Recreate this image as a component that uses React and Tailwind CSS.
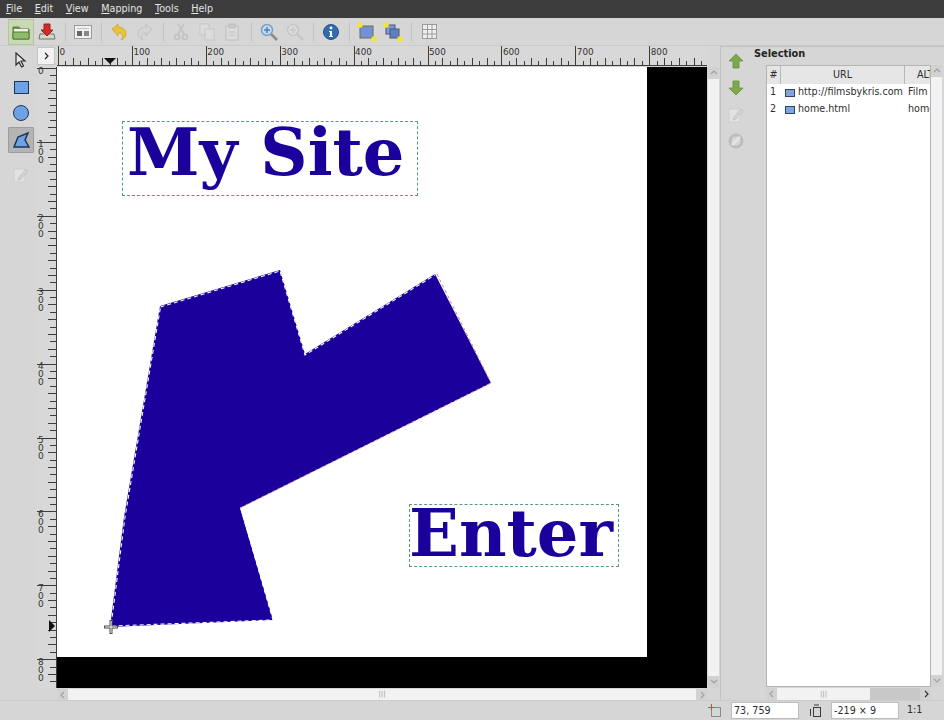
import React from "react";

const PX_PER_100 = 73.9;

const Sep = () => <div className="w-px h-[20px] bg-[#c4c4c4] ml-[5px] mr-[4px]" />;

const ToolBtn = ({ children, active }) => (
  <div
    className={`w-[26px] h-[26px] flex items-center justify-center ${
      active ? "bg-[#c9d9b4] border border-[#b3c49e]" : ""
    }`}
  >
    {children}
  </div>
);

const Mnemonic = ({ first, rest }) => (
  <span className="text-[9.6px] text-[#e4e4e4]">
    <span className="underline">{first}</span>
    {rest}
  </span>
);

const OpenIcon = () => (
  <svg width="18" height="16" viewBox="0 0 18 16">
    <path d="M1 3h6l1 2h9v10H1z" fill="#6e9a4e" stroke="#55793a" />
    <rect x="2" y="5" width="14" height="3" fill="#f0f0e8" />
    <path d="M1 8h16v7H1z" fill="#8fbb6c" stroke="#55793a" />
  </svg>
);

const SaveIcon = () => (
  <svg width="18" height="18" viewBox="0 0 18 18">
    <path d="M2 11h14l1 5H1z" fill="#d8d4ce" stroke="#77736c" />
    <path d="M6 1h6v6h3l-6 6-6-6h3z" fill="#cc2e2a" stroke="#9c1f1c" />
  </svg>
);

const ImageIcon = () => (
  <svg width="18" height="14" viewBox="0 0 18 14">
    <rect x="0.500" y="0.500" width="17" height="13" fill="#f0f0f0" stroke="#9c9c9c" />
    <rect x="3" y="6" width="5" height="5" fill="#666" />
    <rect x="10" y="6" width="5" height="5" fill="#888" />
    <rect x="3" y="3" width="12" height="1" fill="#c4c4c4" />
  </svg>
);

const UndoIcon = ({ flip, color = "#e9c23a", line = "#c9a436" }) => (
  <svg width="16" height="18" viewBox="0 0 16 18" className={flip ? "-scale-x-100" : ""}>
    <path
      d="M1 6l6-5v3c5 0 8 3 8 7 0 3-2 5-5 6 2-2 2-6-1-7-1 0-1.500 0-2 0v3z"
      fill={color}
      stroke={line}
      strokeWidth="0.800"
    />
  </svg>
);

const CutIcon = () => (
  <svg width="16" height="18" viewBox="0 0 16 18" fill="none" stroke="#c2c2c2" strokeWidth="1.600">
    <circle cx="4" cy="14" r="2.500" />
    <circle cx="12" cy="14" r="2.500" />
    <path d="M5 11L11 1M11 11L5 1" />
  </svg>
);

const CopyIcon = () => (
  <svg width="16" height="18" viewBox="0 0 16 18" fill="#dcdcdc" stroke="#c6c6c6">
    <rect x="1" y="1" width="9" height="11" />
    <rect x="6" y="6" width="9" height="11" />
  </svg>
);

const PasteIcon = () => (
  <svg width="16" height="18" viewBox="0 0 16 18" fill="#dcdcdc" stroke="#bebebe">
    <rect x="1" y="3" width="12" height="14" />
    <rect x="4" y="1" width="6" height="4" fill="#c8c8c8" />
    <path d="M4 9h6M4 12h6" />
  </svg>
);

const ZoomIcon = ({ on }) => (
  <svg width="18" height="18" viewBox="0 0 18 18">
    <path d="M11 11l6 6" stroke={on ? "#8a8a8a" : "#c6c6c6"} strokeWidth="2.500" />
    <circle
      cx="7"
      cy="7"
      r="5.500"
      fill={on ? "#c4daf0" : "#dcdcdc"}
      stroke={on ? "#7f9fc4" : "#c6c6c6"}
      strokeWidth="1.500"
    />
    <path d="M4 7h6M7 4v6" stroke={on ? "#4f7fb5" : "#c6c6c6"} strokeWidth="1.500" />
  </svg>
);

const InfoIcon = () => (
  <svg width="16" height="16" viewBox="0 0 16 16">
    <circle cx="8" cy="8" r="7.500" fill="#2f6db0" stroke="#24548c" />
    <circle cx="8" cy="4" r="1.400" fill="#fff" />
    <path d="M6 7h3v5h1v1H6v-1h1V8H6z" fill="#fff" />
  </svg>
);

const OrderIcon = ({ back }) => (
  <svg width="20" height="20" viewBox="0 0 20 20">
    {back ? (
      <>
        <rect x="3" y="3" width="9" height="9" fill="#7c98d6" stroke="#4a5678" />
        <rect x="7" y="7" width="9" height="9" fill="#5f7fc4" stroke="#4a5678" />
      </>
    ) : (
      <rect x="3" y="4" width="13" height="12" fill="#7392d6" stroke="#6b6a58" />
    )}
    <circle cx="3" cy="3" r="2.800" fill="#f4e62e" />
    <circle cx="17" cy="17" r="2.800" fill="#f4e62e" />
  </svg>
);

const GridIcon = () => (
  <svg width="15" height="15" viewBox="0 0 15 15" fill="#eeeeee" stroke="#9a9a9a">
    <rect x="0.500" y="0.500" width="14" height="14" />
    <path d="M5.500 0.500v14M10 0.500v14M0.500 5.500h14M0.500 10h14" fill="none" />
  </svg>
);

const ArrowTool = () => (
  <svg width="12" height="16" viewBox="0 0 12 16">
    <path d="M1 1v12l3-3 2.500 5 2-1-2.500-5h4z" fill="#e8e8e8" stroke="#2c2c2c" strokeWidth="1.200" />
  </svg>
);

const PolyTool = () => (
  <svg width="17" height="16" viewBox="0 0 17 16">
    <path d="M1 15L5 5 15 1 12 8l4 7z" fill="#6ea2e6" stroke="#1f3454" strokeWidth="1.500" />
  </svg>
);

const PencilIcon = () => (
  <svg width="16" height="16" viewBox="0 0 16 16">
    <rect x="1" y="2" width="11" height="13" fill="#e2e2e2" stroke="#cecece" />
    <path d="M6 10l7-8 2 2-7 8-3 1z" fill="#d4d4d4" stroke="#c4c4c4" />
  </svg>
);

const GreenArrow = ({ down }) => (
  <svg width="16" height="16" viewBox="0 0 16 16" className={down ? "rotate-180" : ""}>
    <path d="M8 1l7 7h-4v7H5V8H1z" fill="#7da84e" stroke="#67913e" strokeWidth="0.800" />
  </svg>
);

const CancelIcon = () => (
  <svg width="16" height="16" viewBox="0 0 16 16" fill="none" stroke="#bdbdbd">
    <circle cx="8" cy="8" r="6" strokeWidth="3" />
    <path d="M4 12l8-8" strokeWidth="2.500" stroke="#e4e4e4" />
  </svg>
);

const Chevron = ({ dir, color = "#a0a0a0" }) => {
  const d = {
    up: "M1 5l3-3 3 3",
    down: "M1 2l3 3 3-3",
    left: "M5 1L2 4l3 3",
    right: "M3 1l3 3-3 3",
  }[dir];
  return (
    <svg width="8" height="8" viewBox="0 0 8 8" fill="none" stroke={color} strokeWidth="1.200">
      <path d={d} />
    </svg>
  );
};

const ScrollBtn = ({ dir, color }) => (
  <div className="w-[11px] h-[12px] shrink-0 bg-[#d2d2d2] flex items-center justify-center">
    <Chevron dir={dir} color={color} />
  </div>
);

const TopRuler = () => {
  const labels = [0, 100, 200, 300, 400, 500, 600, 700, 800];
  const ticks = Array.from({ length: 88 }, (_, i) => i);
  return (
    <div className="w-[650px] h-[20px] bg-[#d8d8d8] border-b border-[#3c3c3c]">
      <svg width="650" height="20" viewBox="0 0 650 20">
        {ticks.map((i) => {
          const x = Math.round(1 + (i * PX_PER_100) / 10) + 0.5;
          const major = i % 10 === 0;
          const mid = i % 2 === 0;
          return (
            <line
              key={i}
              x1={x}
              x2={x}
              y1={major ? 0 : mid ? 12 : 15}
              y2={19}
              stroke="#3c3c3c"
              strokeWidth="1"
            />
          );
        })}
        {labels.map((n, i) => (
          <text
            key={n}
            x={2.500 + i * PX_PER_100}
            y={9}
            fontSize="8.800"
            fill="#333"
            fontFamily="'DejaVu Sans', sans-serif"
          >
            {n}
          </text>
        ))}
        <path d="M47 12h12l-6 6z" fill="#111" />
      </svg>
    </div>
  );
};

const SIDE_LABELS = [
  { text: "0", top: "top-[0px]" },
  { text: "100", top: "top-[73px]" },
  { text: "200", top: "top-[147px]" },
  { text: "300", top: "top-[221px]" },
  { text: "400", top: "top-[295px]" },
  { text: "500", top: "top-[369px]" },
  { text: "600", top: "top-[443px]" },
  { text: "700", top: "top-[517px]" },
  { text: "800", top: "top-[591px]" },
];

const SideRuler = () => {
  const ticks = Array.from({ length: 85 }, (_, i) => i);
  return (
    <div className="relative w-[20px] h-[621px] bg-[#d8d8d8] border-r border-[#3c3c3c] overflow-hidden">
      <svg width="20" height="621" viewBox="0 0 20 621">
        {ticks.map((i) => {
          const y = Math.round(1 + (i * PX_PER_100) / 10) + 0.5;
          const major = i % 10 === 0;
          const mid = i % 2 === 0;
          return (
            <line
              key={i}
              x1={major ? 0 : mid ? 11 : 13}
              x2={19}
              y1={y}
              y2={y}
              stroke="#3c3c3c"
              strokeWidth="1"
            />
          );
        })}
        <path d="M12 553v12l6-6z" fill="#111" />
      </svg>
      {SIDE_LABELS.map((l) => (
        <div
          key={l.text}
          className={`absolute left-[1px] ${l.top} w-[6px] break-all text-[9px] leading-[8px] text-[#333]`}
        >
          {l.text}
        </div>
      ))}
    </div>
  );
};

const Canvas = () => (
  <div className="relative w-[650px] h-[621px] bg-black overflow-hidden">
    <div className="absolute left-0 top-0 w-[590px] h-[590px] bg-white" />
    <div className="absolute left-[65px] top-[54px] w-[296px] h-[75px] border border-dashed border-[#4f9a8c] flex items-center pl-[4px]">
      <span className="font-['DejaVu_Serif',serif] font-bold text-[65.5px] leading-none text-[#1c009c] whitespace-nowrap -mt-[13px]">
        My Site
      </span>
    </div>
    <div className="absolute left-[352px] top-[437px] w-[210px] h-[63px] border border-dashed border-[#4f9a8c] flex items-center">
      <span className="font-['DejaVu_Serif',serif] font-bold text-[65.5px] leading-none text-[#1c009c] whitespace-nowrap -mt-[5px] -ml-[1px]">
        Enter
      </span>
    </div>
    <svg className="absolute left-0 top-0" width="650" height="621" viewBox="0 0 650 621">
      <path d="M103 239L223 203L248 287L378 207L434 316L183 441L216 553L53 560L67 450Z" fill="#1c009c" />
      <path
        d="M103.500 240L223 204L248 288L378 208M184 442L216 553L54 559L68 450L103.500 240"
        fill="none"
        stroke="#fff"
        strokeWidth="1.100"
        strokeDasharray="4 3"
      />
      <path d="M380 207L434 316" fill="none" stroke="#e07a8c" strokeWidth="1" strokeDasharray="3 3" />
      <path d="M183 441L434 316" fill="none" stroke="#e9a0c0" strokeWidth="1" strokeDasharray="3 3" />
      <path d="M54 553v14M47 560h14" stroke="#4a4a4a" strokeWidth="3" />
      <path d="M54 554v12M48 560h12" stroke="#fff" strokeWidth="1" />
    </svg>
  </div>
);

const SelectionTable = () => {
  const rows = [
    { n: 1, url: "http://filmsbykris.com", alt: "Film" },
    { n: 2, url: "home.html", alt: "home" },
  ];
  return (
    <div className="w-[165px] h-[622px] bg-white border border-[#b4b4b4] overflow-hidden">
      <div className="flex h-[18px] bg-[#e6e6e6] text-[9.6px] leading-[18px] text-[#2e2e2e]">
        <div className="w-[14px] shrink-0 text-center border-r border-[#b8b8b8]">#</div>
        <div className="w-[124px] shrink-0 text-center border-r border-[#b8b8b8]">URL</div>
        <div className="pl-[12px] whitespace-nowrap overflow-hidden">ALT</div>
      </div>
      {rows.map((r) => (
        <div key={r.n} className="flex items-center h-[17px] text-[9.6px] text-[#2e2e2e]">
          <div className="w-[18px] shrink-0 pl-[3px]">{r.n}</div>
          <div className="w-[10px] h-[8px] bg-[#7ea6dc] border border-[#2e4460] shrink-0" />
          <div className="w-[113px] pl-[3px] shrink-0 whitespace-nowrap">{r.url}</div>
          <div className="whitespace-nowrap">{r.alt}</div>
        </div>
      ))}
    </div>
  );
};

export default function App() {
  return (
    <div className="w-[944px] h-[720px] flex flex-col overflow-hidden bg-[#d6d6d6] font-['DejaVu_Sans',sans-serif]">
      {/* Menu bar */}
      <div className="h-[18px] bg-[#3c3c3c] flex items-center gap-[12.6px] pl-[6px]">
        <Mnemonic first="F" rest="ile" />
        <Mnemonic first="E" rest="dit" />
        <Mnemonic first="V" rest="iew" />
        <Mnemonic first="M" rest="apping" />
        <Mnemonic first="T" rest="ools" />
        <Mnemonic first="H" rest="elp" />
      </div>

      {/* Toolbar */}
      <div className="h-[28px] flex items-center pl-[8px] border-b border-[#cbcbcb]">
        <ToolBtn active>
          <OpenIcon />
        </ToolBtn>
        <ToolBtn>
          <SaveIcon />
        </ToolBtn>
        <Sep />
        <ToolBtn>
          <ImageIcon />
        </ToolBtn>
        <Sep />
        <ToolBtn>
          <UndoIcon />
        </ToolBtn>
        <ToolBtn>
          <UndoIcon flip color="#d4d4d4" line="#bcbcbc" />
        </ToolBtn>
        <Sep />
        <ToolBtn>
          <CutIcon />
        </ToolBtn>
        <ToolBtn>
          <CopyIcon />
        </ToolBtn>
        <ToolBtn>
          <PasteIcon />
        </ToolBtn>
        <Sep />
        <ToolBtn>
          <ZoomIcon on />
        </ToolBtn>
        <ToolBtn>
          <ZoomIcon />
        </ToolBtn>
        <Sep />
        <ToolBtn>
          <InfoIcon />
        </ToolBtn>
        <Sep />
        <ToolBtn>
          <OrderIcon />
        </ToolBtn>
        <ToolBtn>
          <OrderIcon back />
        </ToolBtn>
        <Sep />
        <ToolBtn>
          <GridIcon />
        </ToolBtn>
      </div>

      {/* Main area */}
      <div className="h-[654px] flex">
        {/* Left tools */}
        <div className="w-[37px] flex flex-col items-start pl-[8px] pt-[1px]">
          <ToolBtn>
            <ArrowTool />
          </ToolBtn>
          <div className="h-px" />
          <ToolBtn>
            <div className="w-[15px] h-[13px] bg-[#6ea2e6] border-[1.5px] border-[#1f3454]" />
          </ToolBtn>
          <ToolBtn>
            <div className="w-[16px] h-[16px] rounded-full bg-[#6ea2e6] border-[1.5px] border-[#1f3454]" />
          </ToolBtn>
          <div className="h-px" />
          <div className="w-[26px] h-[26px] flex items-center justify-center bg-[#b4b4b4] border border-[#9c9c9c] rounded-[1px]">
            <PolyTool />
          </div>
          <div className="h-[9px]" />
          <ToolBtn>
            <PencilIcon />
          </ToolBtn>
        </div>

        {/* Editor */}
        <div className="w-[683px] flex flex-col">
          <div className="flex h-[21px]">
            <div className="w-[18px] h-[18px] mt-px bg-[#f2f2f2] border border-[#c4c4c4] flex items-center justify-center">
              <Chevron dir="right" color="#222" />
            </div>
            <div className="w-[2px]" />
            <TopRuler />
          </div>
          <div className="flex">
            <SideRuler />
            <Canvas />
            <div className="w-px" />
            <div className="w-[11px] h-[621px] flex flex-col">
              <ScrollBtn dir="up" />
              <div className="flex-1 bg-[#f2f2f2]" />
              <ScrollBtn dir="down" />
            </div>
          </div>
          <div className="flex mt-px ml-[20px] w-[650px] h-[11px] items-center">
            <ScrollBtn dir="left" />
            <div className="flex-1 h-[11px] bg-[#f2f2f2] flex items-center justify-center">
              <span className="text-[7px] leading-none text-[#9a9a9a]">|||</span>
            </div>
            <ScrollBtn dir="right" />
          </div>
        </div>

        {/* Selection panel */}
        <div className="flex-1 h-[654px] border-l border-t border-[#c2c2c2] flex">
          <div className="w-[33px] flex flex-col items-center pt-[1px] pr-[4px] gap-[1px] h-[653px]">
            <div className="h-[26px] flex items-center justify-center">
              <GreenArrow />
            </div>
            <div className="h-[26px] flex items-center justify-center">
              <GreenArrow down />
            </div>
            <div className="h-[26px] flex items-center justify-center">
              <PencilIcon />
            </div>
            <div className="h-[26px] flex items-center justify-center -mt-px">
              <CancelIcon />
            </div>
          </div>
          <div className="flex flex-col">
            <div className="h-[18px] text-[9.8px] font-bold text-[#222] leading-[13px]">Selection</div>
            <div className="flex ml-[12px]">
              <SelectionTable />
              <div className="w-[11px] h-[622px] flex flex-col">
                <ScrollBtn dir="up" />
                <div className="flex-1 bg-[#f2f2f2]" />
                <ScrollBtn dir="down" />
              </div>
            </div>
            <div className="flex ml-[12px] w-[165px] h-[12px] mt-px bg-[#c8c8c8]">
              <ScrollBtn dir="left" />
              <div className="w-[93px] bg-[#f2f2f2] flex items-center justify-center">
                <span className="text-[7px] leading-none text-[#9a9a9a]">|||</span>
              </div>
              <div className="flex-1" />
              <ScrollBtn dir="right" color="#333" />
            </div>
          </div>
        </div>
      </div>

      {/* Status bar */}
      <div className="h-[20px] flex items-center border-t border-[#cbcbcb] pl-[708px] text-[9.6px] text-[#2e2e2e]">
        <svg width="13" height="13" viewBox="0 0 13 13" fill="none">
          <rect x="3.500" y="3.500" width="9" height="9" stroke="#8a8a8a" />
          <path d="M3.500 0v6M0 3.500h6" stroke="#d6443c" />
        </svg>
        <div className="w-[68px] h-[17px] ml-[10px] bg-white border border-[#bdbdbd] pl-[2px] leading-[15px]">
          73, 759
        </div>
        <svg className="ml-[10px]" width="12" height="13" viewBox="0 0 12 13" fill="none" stroke="#3c3c3c">
          <rect x="4.500" y="3.500" width="7" height="9" />
          <path d="M1.500 5v7M5 1h5" />
        </svg>
        <div className="w-[68px] h-[17px] ml-[10px] bg-white border border-[#bdbdbd] pl-[2px] leading-[15px]">
          -219 × 9
        </div>
        <span className="ml-[8px]">1:1</span>
      </div>
    </div>
  );
}
